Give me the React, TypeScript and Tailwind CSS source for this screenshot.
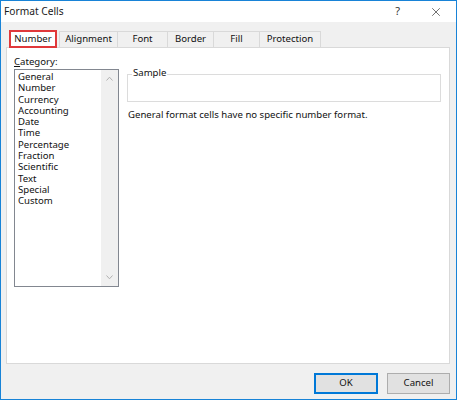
import { X } from 'lucide-react'

const categories = [
  'General',
  'Number',
  'Currency',
  'Accounting',
  'Date',
  'Time',
  'Percentage',
  'Fraction',
  'Scientific',
  'Text',
  'Special',
  'Custom',
]

const tabs = [
  { label: 'Alignment', w: 'w-[59px] ml-[2px]' },
  { label: 'Font', w: 'w-[51px] -ml-[1px]' },
  { label: 'Border', w: 'w-[47px] -ml-[1px]' },
  { label: 'Fill', w: 'w-[47px] -ml-[1px]' },
  { label: 'Protection', w: 'w-[62px] -ml-[1px]' },
]

function Chevron({ up }: { up?: boolean }) {
  return (
    <svg width="7" height="5" viewBox="0 0 7 5" className="text-[#b0b0b0]">
      <path
        d={up ? 'M0.5 4.5 L3.5 1.2 L6.5 4.5' : 'M0.5 0.5 L3.5 3.8 L6.5 0.5'}
        fill="none"
        stroke="currentColor"
        strokeWidth="1"
      />
    </svg>
  )
}

export default function App() {
  return (
    <div
      className="w-[457px] h-[400px] flex flex-col border border-[#1883d7] bg-[#f0f0f0] text-[9.6px] text-[#111]"
      style={{ fontFamily: '"Noto Sans", "Open Sans", sans-serif' }}
    >
      {/* title bar */}
      <div className="h-[21px] bg-white flex items-center pl-[3px]">
        <span className="text-[10.2px] text-[#1a1a1a]">Format Cells</span>
        <span className="ml-auto mr-[29px] text-[11px] text-[#333]">?</span>
        <X size={14} strokeWidth={1.2} className="mr-[13px] text-[#333]" />
      </div>

      {/* tabs */}
      <div className="flex items-end h-[18px] mt-[7px] ml-[8px]">
        <div className="w-[48px] h-[18px] border-2 border-[#e0383a] bg-white flex items-center justify-center relative z-10 -mb-[1px]">
          Number
        </div>
        {tabs.map((t) => (
          <div
            key={t.label}
            className={`${t.w} h-[16px] border border-b-0 border-[#d9d9d9] flex items-center justify-center`}
          >
            {t.label}
          </div>
        ))}
      </div>

      {/* panel */}
      <div className="ml-[5px] w-[444px] h-[317px] border border-[#d9d9d9] bg-white flex pl-[7px] pt-[8px]">
        <div className="flex flex-col">
          <div className="h-[13px] leading-[12px]">
            <span className="underline">C</span>ategory:
          </div>
          <div className="w-[105px] h-[218px] border border-[#828790] flex">
            <div className="flex-1 pl-[3px] pt-[1px] leading-[11.3px]">
              {categories.map((c) => (
                <div key={c}>{c}</div>
              ))}
            </div>
            <div className="w-[17px] bg-[#f0f0f0] flex flex-col items-center justify-between py-[6px]">
              <Chevron up />
              <Chevron />
            </div>
          </div>
        </div>

        <div className="ml-[8px] flex flex-col">
          <div className="mt-[18px] w-[314px] h-[28px] border border-[#dcdcdc] relative">
            <span className="absolute -top-[8px] left-[4px] bg-white px-[1px] leading-[12px]">
              Sample
            </span>
          </div>
          <div className="mt-[6px] pl-[1px]">General format cells have no specific number format.</div>
        </div>
      </div>

      {/* buttons */}
      <div className="flex justify-end gap-[9px] mt-[9px] mr-[6px]">
        <button className="w-[64px] h-[21px] border-2 border-[#0078d7] bg-[#e1e1e1] flex items-center justify-center">
          OK
        </button>
        <button className="w-[63px] h-[21px] border border-[#adadad] bg-[#e1e1e1] flex items-center justify-center">
          Cancel
        </button>
      </div>
    </div>
  )
}
